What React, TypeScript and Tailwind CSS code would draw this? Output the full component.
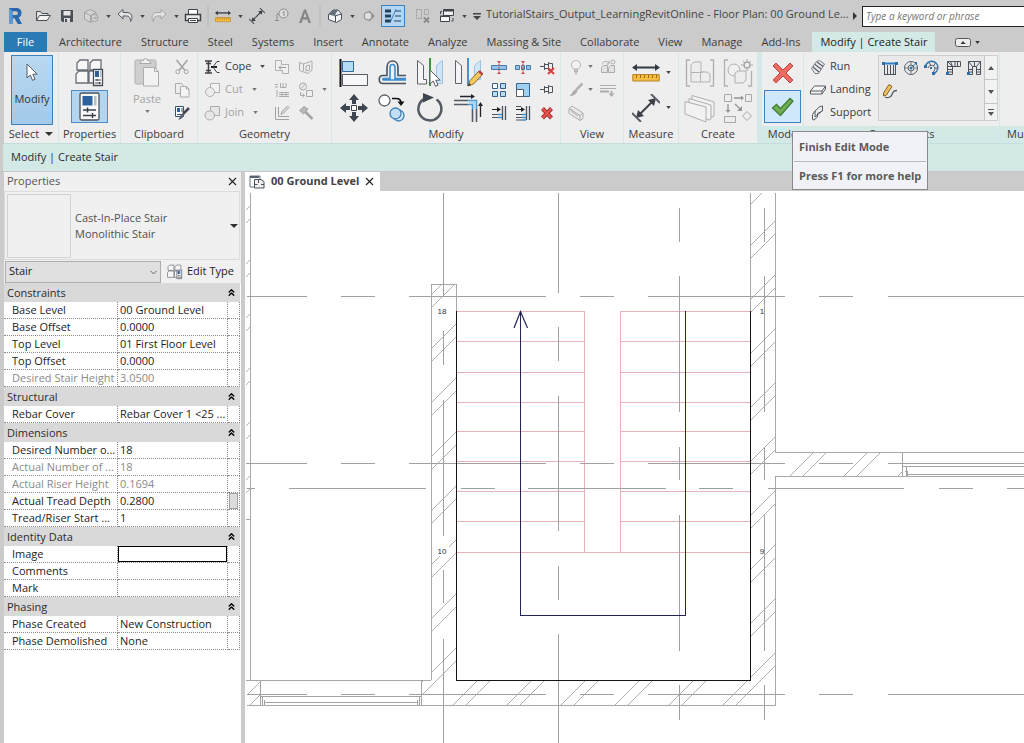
import type { ReactNode } from 'react';
import { ChevronDown, ChevronsUp, X } from 'lucide-react';

type IconProps = { w?: number; h?: number; children: ReactNode };

function Icon({ w = 16, h = 16, children }: IconProps) {
  return (
    <svg width={w} height={h} viewBox={`0 0 ${w} ${h}`} fill="none" className="shrink-0" aria-hidden="true">
      {children}
    </svg>
  );
}

function Caret({ className = 'text-[#444]' }: { className?: string }) {
  return (
    <svg width="5" height="3" viewBox="0 0 6 4" className={`shrink-0 ${className}`} aria-hidden="true">
      <path d="M0 0h6L3 4z" fill="currentColor" />
    </svg>
  );
}

function WideCaret() {
  return (
    <svg width="8" height="4" viewBox="0 0 8 4" className="shrink-0 text-[#333]" aria-hidden="true">
      <path d="M0 0h8L4 4z" fill="currentColor" />
    </svg>
  );
}

/* ---------- Quick access icons ---------- */

const RevitLogo = () => (
  <Icon w={16} h={18}>
    <path d="M2 1h7c3.500 0 5.500 1.800 5.500 5 0 2.300-1.200 3.900-3 4.600L15 17h-4.200L7.500 11.200H5.600V17H2z" fill="#2a67ae" />
    <path d="M5.600 4.300v3.800h3c1.400 0 2.200-.700 2.200-1.900s-.800-1.900-2.200-1.900z" fill="#cccccc" />
    <path d="M2 1l3.600 3.300V17H2z" fill="#5b9bd5" />
  </Icon>
);

const OpenIcon = () => (
  <Icon>
    <path d="M1.500 12.500v-9h4l1.500 2h6v2" stroke="#4a4f57" fill="#e4e4e4" />
    <path d="M1.500 12.500l3-5h11l-3.500 5z" stroke="#4a4f57" fill="#f2f2f2" />
  </Icon>
);

const SaveIcon = () => (
  <Icon>
    <path d="M2 2h12v12H3.500L2 12.500z" fill="#4b5058" />
    <path d="M4.500 3h7v4.500h-7z" fill="#e6e6e6" />
    <path d="M5 10h6v4H5z" fill="#dadada" />
    <path d="M6 11h2v3H6z" fill="#4b5058" />
  </Icon>
);

const SyncIcon = () => (
  <Icon>
    <path d="M1.500 4.500l5.500-3 6 3v6l-5.500 4-6-3.500z" stroke="#a2a2a2" fill="#d4d4d4" />
    <path d="M1.500 4.500l6 3 5.500-3M7.500 7.500v7" stroke="#a2a2a2" />
    <circle cx="11.500" cy="10" r="3.500" stroke="#a2a2a2" fill="#d6d6d6" />
    <path d="M9.500 10h4M12 8.500l1.500 1.500-1.500 1.500" stroke="#a2a2a2" />
  </Icon>
);

const UndoIcon = ({ color = '#555b63', flip = false }: { color?: string; flip?: boolean }) => (
  <Icon>
    <path
      d={
        flip
          ? 'M15 6l-5-4.500v3H6C2.500 4.500 1 7 1 9.500c0 1.500.500 3 1.500 4C2.500 9.500 4 8 6.500 8H10v3z'
          : 'M1 6l5-4.500v3h4c3.500 0 5 2.500 5 5 0 1.500-.500 3-1.500 4 0-4-1.500-5.500-4-5.500H6v3z'
      }
      stroke={color}
      fill="#e3e3e3"
    />
  </Icon>
);

const PrintIcon = () => (
  <Icon w={18}>
    <path d="M4.500 6.500v-5h9v5" stroke="#3f444b" fill="#fff" />
    <path d="M1.500 6.500h15v6h-15z" stroke="#3f444b" fill="#e8e8e8" strokeWidth="1.500" />
    <path d="M4.500 10.500h9v4h-9z" stroke="#3f444b" fill="#fff" />
    <path d="M6 12.500h6" stroke="#3f444b" />
  </Icon>
);

const RulerIcon = ({ w = 16, h = 16 }: { w?: number; h?: number }) => (
  <svg width={w} height={h} viewBox="0 0 28 20" preserveAspectRatio="none" fill="none" className="shrink-0" aria-hidden="true">
    <path d="M3 4.500h22" stroke="#333b45" strokeWidth="2" />
    <path d="M0 4.500L5 1v7zM28 4.500L23 1v7z" fill="#333b45" />
    <path d="M.800 11.500h26.400v6.500H.800z" fill="#f5bd3f" stroke="#b4842c" />
    <path d="M4.500 12v3M8.500 12v3M12.500 12v3M16.500 12v3M20.500 12v3M24.500 12v3" stroke="#9a6c1a" />
  </svg>
);

const AlignedDimIcon = ({ w = 16, h = 16 }: { w?: number; h?: number }) => (
  <svg width={w} height={h} viewBox="0 0 28 28" fill="none" className="shrink-0" aria-hidden="true">
    <path d="M6 22L22 6" stroke="#3b4048" strokeWidth="2" />
    <path d="M4 24l2-8 6 6zM24 4l-8 2 6 6z" fill="#3b4048" />
    <path d="M0 19l9 9M19 0l9 9" stroke="#5b6068" strokeWidth="2" />
  </svg>
);

const TagIcon = () => (
  <Icon>
    <circle cx="10.500" cy="5.500" r="4.500" stroke="#8c8c8c" fill="#dcdcdc" />
    <path d="M9.500 4.500l1.500-1v4.500M6 6H4v6.500M2 12.500h4" stroke="#8c8c8c" />
  </Icon>
);

const TextIcon = () => (
  <Icon>
    <path d="M2 15L7 1.500h2L14 15h-2.600l-1.200-3.600H5.800L4.600 15z" fill="#858585" />
    <path d="M6.500 9.200h3L8 4.500z" fill="#cccccc" />
  </Icon>
);

const House3DIcon = () => (
  <Icon>
    <path d="M1.500 6.500L6 2h5l3.500 4v5.500l-5 3-8-3z" stroke="#44505e" fill="#f4f4f4" />
    <path d="M1 6.500L6 2h5L7.500 8z" fill="#66717d" />
    <path d="M7.500 8l7-2M8.500 8v6" stroke="#44505e" />
  </Icon>
);

const SectionIcon = () => (
  <Icon>
    <path d="M8 2l6 6-6 6z" fill="#989898" />
    <circle cx="7" cy="8" r="4" stroke="#8a8a8a" fill="#dedede" />
  </Icon>
);

const ThinLinesIcon = () => (
  <Icon w={18}>
    <path d="M1 3h6M1 8h6M1 13h6" stroke="#27405c" strokeWidth="3" />
    <path d="M11 3h6M11 8h6M10 13h7" stroke="#27405c" />
    <path d="M12 1L6 15" stroke="#3f83c4" />
  </Icon>
);

const CloseHiddenIcon = () => (
  <Icon>
    <path d="M1.500 1.500h5v9h-5zM9.500 1.500h4v5h-4z" stroke="#9a9a9a" strokeDasharray="2 1" />
    <path d="M9 9.500l5 5M14 9.500l-5 5" stroke="#8a8a8a" strokeWidth="1.800" />
  </Icon>
);

const SwitchWindowsIcon = () => (
  <Icon>
    <path d="M4.500 1.500h10v6h-10z" stroke="#3e444c" fill="#eee" />
    <path d="M4 2.500h11M1 8.500h10" stroke="#3e444c" strokeWidth="2" />
    <path d="M1.500 8.500h9v5h-9z" stroke="#3e444c" fill="#f7f7f7" />
    <path d="M1.500 6V3.500H3M14 10v3h-1.500" stroke="#3e444c" />
  </Icon>
);

/* ---------- Ribbon icons ---------- */

const CursorShape = ({ x = 0, y = 0 }: { x?: number; y?: number }) => (
  <path d="M0 0v14l3.300-3 2.200 5.300 2.500-1-2.200-5.100h4.400z" transform={`translate(${x} ${y})`} fill="#fff" stroke="#555c66" />
);

const TypePropsIcon = ({ w = 30, h = 30 }: { w?: number; h?: number }) => (
  <svg width={w} height={h} viewBox="0 0 30 30" fill="none" className="shrink-0" aria-hidden="true">
    <path d="M2 5l3-3h8v10H2zM15 5l3-3h8v10H15zM1 16l3-3h9v12H1zM14 13h10v12H14z" fill="#f7f7f7" stroke="#6a6f77" strokeWidth="1.300" />
    <path d="M18.500 11.500h9v16h-9z" fill="#fff" stroke="#454b55" strokeWidth="1.300" />
    <path d="M20 13h4v6h-4z" fill="#2f5f95" />
    <path d="M25 13h1.500v6H25z" fill="#a9bdd3" />
    <path d="M20 22h6M20 25h6M22 21v2M24.500 24v2" stroke="#39404a" />
  </svg>
);

const PropertiesIcon = () => (
  <Icon w={24} h={29}>
    <rect x="2" y="1" width="19" height="27" rx="1.500" fill="#fafafa" stroke="#4b525c" strokeWidth="1.300" />
    <path d="M4.500 4h10v9.500h-10z" fill="#2d629f" />
    <path d="M16 4h2.500v9.500H16z" fill="#b5bfca" />
    <path d="M5 18h13M5 23.500h13" stroke="#3a4049" strokeWidth="1.500" />
    <path d="M9.500 15.500v5M14.500 21v5" stroke="#3a4049" strokeWidth="1.500" />
  </Icon>
);

const PasteIcon = () => (
  <Icon w={26} h={30}>
    <rect x="1" y="3" width="21" height="24" rx="1.500" fill="#cfcfcf" stroke="#b0b0b0" />
    <path d="M6 6.500l1.500-3h2a2 2 0 014 0h2l1.500 3z" fill="#f1f1f1" stroke="#a8a8a8" />
    <path d="M9.500 10.500h11l4 4v14.500h-15z" fill="#f2f2f2" stroke="#adadad" />
    <path d="M20.500 10.500v4h4" stroke="#adadad" />
  </Icon>
);

const ScissorsIcon = () => (
  <Icon>
    <path d="M2.500 1L11 11.500M13.500 1L5 11.500" stroke="#a6a6a6" strokeWidth="1.600" />
    <circle cx="3.800" cy="12.700" r="2" stroke="#a6a6a6" />
    <circle cx="12.200" cy="12.700" r="2" stroke="#a6a6a6" />
  </Icon>
);

const CopyIcon = () => (
  <Icon>
    <path d="M1.500 1.500h6l2 2v8h-8z" fill="#ededed" stroke="#ababab" />
    <path d="M6.500 4.500h6l2.500 2.500v8h-8.500z" fill="#f4f4f4" stroke="#ababab" />
    <path d="M12.500 4.500V7H15" stroke="#ababab" />
  </Icon>
);

const MatchIcon = () => (
  <Icon>
    <path d="M1.500 1.500h8v10h-8z" fill="#fff" stroke="#36506e" />
    <path d="M3 3h3v4H3z" fill="#2f5f95" />
    <path d="M3 9.500h5M8 3v4" stroke="#36506e" />
    <path d="M15 3l-6 6" stroke="#45484e" strokeWidth="2.500" />
    <path d="M9.500 8.500c1 1 1 1.500 0 3C8.500 13.500 6 14.500 4 15c1.500-1.500 1.500-3 2.500-4.500 1-1.500 2-2.500 3-2z" fill="#57626f" />
  </Icon>
);

const CopeIcon = () => (
  <Icon>
    <path d="M1 2h7M1 14h7M4.500 2v12M2 4.500h5M2 11.500h5" stroke="#3d4148" strokeWidth="1.500" />
    <path d="M7 8h6" stroke="#222" strokeWidth="2" />
    <path d="M15.500 2.500H13L10 6.500v3l3 4h2.500" stroke="#3d4148" />
  </Icon>
);

const CutIcon = () => (
  <Icon>
    <path d="M6.500 1.500h9v9h-9z" fill="#f3f3f3" stroke="#b0b0b0" />
    <circle cx="6" cy="10" r="4.500" fill="#ececec" stroke="#b0b0b0" />
  </Icon>
);

const JoinIcon = () => (
  <Icon>
    <path d="M6.500 6V1.500h9v9h-5A4.700 4.700 0 111 10c0-2.500 2-4.300 5.500-4z" fill="#e6e6e6" stroke="#acacac" />
    <path d="M6.500 6c2.500.300 4 2 4 4.500" stroke="#acacac" />
  </Icon>
);

const WallJoinIcon = () => (
  <Icon>
    <path d="M1.500 1.500h6v4h7v9h-6v-3h-7z" fill="#f0f0f0" stroke="#b0b0b0" />
    <path d="M5 8.500h7M7 6.500l-2 2 2 2" stroke="#9c9c9c" />
  </Icon>
);

const SplitFaceIcon = () => (
  <Icon>
    <path d="M1.500 3.500l4 1.500 8.500-3v9l-4 3.500-8.500-3z" fill="#ececec" stroke="#adadad" />
    <path d="M5.500 5v7M8 7l3.500-1v5L8 12z" stroke="#adadad" />
  </Icon>
);

const BeamIcon = () => (
  <Icon>
    <path d="M1 2.500h3M1 5h3M6.500 1v4.500H12V1M9 1v4M3 8v7M5 10.500h10M5 12.500h10M5 14.500h10M8 10v5M12 10v5" stroke="#ababab" />
  </Icon>
);

const PaintRoomIcon = () => (
  <Icon>
    <circle cx="5" cy="4.500" r="3.500" stroke="#a8a8a8" />
    <path d="M3 6.500l4-4M8.500 8.500h6v6h-6zM2.500 10v3.500h4M4.500 11.500l2 2-2 2" stroke="#a8a8a8" />
  </Icon>
);

const DemolishPlanIcon = () => (
  <Icon>
    <path d="M1.500 2v12.500H15M4.500 2v9.500H15" stroke="#a3a3a3" />
    <path d="M7 9.500l1-3 5.500-5.500 1.500 1.500-5.500 5.500z" fill="#ddd" stroke="#a3a3a3" />
  </Icon>
);

const HammerIcon = () => (
  <Icon>
    <path d="M1.500 5.500L6 1.500l4 2.500-4.500 5z" fill="#b8b8b8" stroke="#a3a3a3" />
    <path d="M7.500 7l7 7" stroke="#a3a3a3" strokeWidth="2.500" />
  </Icon>
);

const AlignIcon = () => (
  <Icon w={30} h={28}>
    <path d="M1.500 0v28" stroke="#111" strokeWidth="2" />
    <path d="M3.500 2.500h11v10h-11z" fill="#b5dcf5" stroke="#34679c" />
    <path d="M3.500 15.500h25v11h-25z" fill="#f7f7f7" stroke="#555b64" />
  </Icon>
);

const OffsetIcon = () => (
  <Icon w={30} h={28}>
    <path d="M29 24.500H6c-5 0-5-8 0-8h4V8c0-8 11-8 11 0v8.500h8" stroke="#4a525d" strokeWidth="1.600" />
    <path d="M29 21H6.500c-1 0-1-1.500 0-1.500H13V8.500c0-4 5-4 5 0v11h11" stroke="#3e8ccb" strokeWidth="1.600" />
  </Icon>
);

const MirrorPickIcon = () => (
  <Icon w={30} h={30}>
    <path d="M2.500 2.500l6 5v14h3v4.500h-9z" fill="#f5f5f5" stroke="#5c636d" />
    <path d="M27.500 2.500l-6 5v18h6z" fill="#cfe6f6" stroke="#9cc3e0" />
    <path d="M15 0v28" stroke="#3d9341" strokeWidth="2" />
    <CursorShape x={15} y={12} />
  </Icon>
);

const MirrorDrawIcon = () => (
  <Icon w={30} h={30}>
    <path d="M2.500 2.500l6 5v18h-6z" fill="#f5f5f5" stroke="#5c636d" />
    <path d="M27.500 2.500l-6 5v14h6z" fill="#cfe6f6" stroke="#9cc3e0" />
    <path d="M15 0v28" stroke="#4a93cf" strokeWidth="2" />
    <path d="M15 28l2-5.500L26 13l3.500 3.500L20.500 26z" fill="#f4c95d" stroke="#8a6a2c" />
    <path d="M26 13l3.500 3.500" stroke="#b7454c" strokeWidth="2.500" />
    <path d="M15 28l1-3 2 2z" fill="#333" />
  </Icon>
);

const MoveIcon = () => (
  <Icon w={30} h={30}>
    <path d="M12.500 12.500h5v5h-5z" fill="#fff" stroke="#3f454e" />
    <path d="M15 1l5 6h-3v4h-4V7h-3zM15 29l-5-6h3v-4h4v4h3zM1 15l6-5v3h4v4H7v3zM29 15l-6 5v-3h-4v-4h4v-3z" fill="#3f454e" />
  </Icon>
);

const CopyElementsIcon = () => (
  <Icon w={30} h={30}>
    <circle cx="7.500" cy="7.500" r="5.500" fill="#fff" stroke="#5c636d" strokeWidth="1.300" />
    <path d="M15 5.500h4c4 0 5 2 5 4.500" stroke="#111" strokeWidth="1.600" />
    <path d="M20.500 8.500h7L24 13z" fill="#111" />
    <circle cx="21.500" cy="22.500" r="5.500" fill="#d7ecfa" stroke="#3e7fb8" strokeWidth="1.300" />
    <circle cx="18.500" cy="20.500" r="5.500" fill="#c2e0f5" stroke="#3e7fb8" strokeWidth="1.300" />
  </Icon>
);

const RotateIcon = () => (
  <Icon w={30} h={30}>
    <path d="M10 5.500A11.500 11.500 0 1021.500 6.500" stroke="#555b64" strokeWidth="2.500" />
    <path d="M8 0l11 4.500L8 9.500z" fill="#3f454e" />
  </Icon>
);

const TrimIcon = () => (
  <Icon w={30} h={30}>
    <path d="M1 7.500h14M1 11.500h14" stroke="#555b64" strokeWidth="1.600" />
    <path d="M15 7.500h8.500V16M15 11.500h4.500V16" stroke="#4a9ad8" strokeWidth="1.600" />
    <path d="M16 9.500h5.500V16" stroke="#a8d3f2" strokeWidth="2.500" />
    <path d="M19.500 16v13M23.500 16v13" stroke="#555b64" strokeWidth="1.600" />
    <path d="M7 3.500h12M27.500 24V12" stroke="#22262c" strokeWidth="1.300" />
    <path d="M18 1l4 2.500L18 6zM25 13l2.500-4L30 13z" fill="#22262c" />
  </Icon>
);

const SplitIcon = ({ gap = false }: { gap?: boolean }) => (
  <Icon>
    <path d={gap ? 'M.500 6.500h4v4h-4zM11.500 6.500h4v4h-4zM6.500 6.500h3v4h-3z' : 'M.500 6.500h15v4H.500z'} fill="#8fc5ea" stroke="#4a7ba8" />
    <path d="M8 5v7" stroke="#c33a3a" strokeDasharray="2 1" />
    <path d="M6 2h4L8 5zM6 15h4L8 12z" fill="#d05555" />
  </Icon>
);

const PinIcon = ({ x = false }: { x?: boolean }) => (
  <Icon>
    <path d="M1 7.500h4M5.500 4v7M5.500 5.500h4M5.500 9.500h4M9.500 3.500l1.500 1h2.500v6H11l-1.500 1z" stroke="#4d535c" />
    {x && <path d="M9 9l6 6M15 9l-6 6" stroke="#d5403e" strokeWidth="2" />}
  </Icon>
);

const ArrayIcon = () => (
  <Icon>
    <path d="M1.500 1.500h5v5h-5z" fill="#fff" stroke="#365f8c" />
    <path d="M9.500 1.500h5v5h-5zM1.500 9.500h5v5h-5zM9.500 9.500h5v5h-5z" fill="#b9dcf5" stroke="#365f8c" />
  </Icon>
);

const ScaleIcon = () => (
  <Icon>
    <path d="M1.500 1.500h13v13h-13z" fill="#9fd0f0" stroke="#36658f" />
    <path d="M1.500 7.500h7v7h-7z" fill="#fff" stroke="#555b64" />
  </Icon>
);

const ExtendIcon = ({ multi = false }: { multi?: boolean }) => (
  <Icon>
    <path d="M11.500 1v14M14.500 1v14" stroke="#4b525c" strokeWidth="1.300" />
    <path d="M1 4.500h7" stroke="#222" />
    <path d="M6 2l4 2.500L6 7z" fill="#222" />
    <path d={multi ? 'M1 9.500h6M1 12.500h6M1 15h6M1 1.500h5' : 'M1 9.500h6M1 12.500h6'} stroke="#4b525c" />
    <path d={multi ? 'M7 9.500h4M7 12.500h4M7 15h4' : 'M7 9.500h4M7 12.500h4'} stroke="#3f93d4" strokeWidth="1.500" />
  </Icon>
);

const DeleteIcon = () => (
  <Icon>
    <path d="M3.500 3.500l9 9.500M12.500 3.500l-9 9.500" stroke="#9f2323" strokeWidth="4" />
    <path d="M3.500 3.500l9 9.500M12.500 3.500l-9 9.500" stroke="#e25450" strokeWidth="2.500" />
  </Icon>
);

const BulbIcon = () => (
  <Icon>
    <circle cx="8" cy="6" r="4.500" fill="#f3f3f3" stroke="#b8b8b8" />
    <path d="M6 10.500h4M6 12.500h4M7 14.500h2" stroke="#adadad" strokeWidth="1.500" />
  </Icon>
);

const DisplaceIcon = () => (
  <Icon>
    <path d="M1.500 8.500l2-2h4v7h-6zM8.500 8.500l2-2h4v7h-6z" fill="#e2e2e2" stroke="#adadad" />
    <path d="M2 5.500C3 2 7 1.500 9 4M9 1.500V5H6" stroke="#adadad" />
    <circle cx="13" cy="3" r="2" stroke="#adadad" />
  </Icon>
);

const BrushIcon = () => (
  <Icon>
    <path d="M14.500 1.500L8 8" stroke="#b3b3b3" strokeWidth="2.500" />
    <path d="M8.500 7.500c1.500 1.500.500 3.500-1 4.500-2 1.500-4 2-6.500 2.500 2-1.500 2.500-3 3.500-4.500 1-1.500 2.500-3 4-2.500z" fill="#adadad" />
  </Icon>
);

const LineworkIcon = () => (
  <Icon>
    <path d="M0 3.500h16M0 6.500h16" stroke="#adadad" />
    <path d="M0 9.500h9M11.500 9v3" stroke="#adadad" strokeWidth="2" />
    <path d="M8.500 11.500h6L11.500 15z" fill="#adadad" />
  </Icon>
);

const SectionBoxIcon = () => (
  <Icon>
    <path d="M1 3.500L4 1l11 7v5.500l-3 2-11-7z" fill="#e9e9e9" stroke="#adadad" />
    <path d="M1 3.500l11 7v5M12 10.500L15 8M4 4v3l6 4" stroke="#adadad" />
  </Icon>
);

const GroupIcon = () => (
  <Icon w={30} h={28}>
    <path d="M5 1H1.500v26H5M25 1h3.500v26H25" stroke="#b0b0b0" strokeWidth="1.300" />
    <path d="M6 6l3-3h7v10h6l3 2v8H6z" fill="#ededed" stroke="#b3b3b3" />
    <path d="M6 13.500h9.500v9.500M15.500 14l3-1.500" stroke="#b3b3b3" />
  </Icon>
);

const CreateSimilarIcon = () => (
  <Icon w={30} h={28}>
    <path d="M5 1H1.500v26H5M25 27h3.500V12" stroke="#b0b0b0" strokeWidth="1.300" />
    <circle cx="11" cy="11" r="6" fill="#f0f0f0" stroke="#b0b0b0" />
    <path d="M12 14l3-2h8v9l-3 3h-8z" fill="#ededed" stroke="#b0b0b0" />
    <circle cx="24" cy="6" r="3" stroke="#a6a6a6" strokeWidth="1.500" />
    <path d="M24 0v2M24 10v2M18 6h2M28 6h2M20 2l1.500 1.500M28 2l-1.500 1.500" stroke="#a6a6a6" />
  </Icon>
);

const AssemblyIcon = () => (
  <Icon w={32} h={30}>
    <path d="M8 2.500L30 9v14l-2 1L8 14z" fill="#f2f2f2" stroke="#adadad" />
    <path d="M5 5.500L27 12v14l-2 1L5 18z" fill="#f2f2f2" stroke="#adadad" />
    <path d="M1 8.500L22 14v15L1 21z" fill="#f2f2f2" stroke="#adadad" />
  </Icon>
);

const PartsIcon = () => (
  <Icon w={30} h={30}>
    <path d="M1.500 1.500h7v7h-7zM22.500 1.500h6v7h-6zM1.500 23.500h11v6h-11zM24 18.500l4.500 4.500-4.500 4.500-4.500-4.500z" fill="#ededed" stroke="#a8a8a8" />
    <path d="M11 5h8M5 11v7M12 11l5 5" stroke="#949494" strokeWidth="1.300" />
    <path d="M18 2.500l3 2.500-3 2.500zM2.500 17h5L5 20zM14 18h5v-5z" fill="#949494" />
  </Icon>
);

const CancelIcon = () => (
  <Icon w={24} h={24}>
    <path d="M2 5l3-3 7 7 7-7 3 3-7 7 7 7-3 3-7-7-7 7-3-3 7-7z" fill="#ee6b64" stroke="#c24742" />
  </Icon>
);

const FinishIcon = () => (
  <Icon w={24} h={22}>
    <path d="M1.500 12l4-3.500 4 4L19 2.500l3 2.500L9.500 19.500z" fill="#6fae53" stroke="#417f37" strokeWidth="1.300" />
  </Icon>
);

const RunIcon = () => (
  <Icon>
    <path d="M1.500 9.500l5-7 3-1 5 3.500-6 9.500H5z" fill="#ededed" stroke="#737982" />
    <path d="M3 8l6 5M5 5.500l6 4.500M7 3l6 4.500" stroke="#5c636d" strokeWidth="1.300" />
  </Icon>
);

const LandingIcon = () => (
  <Icon>
    <path d="M.500 9l4-5h11l-3.500 5zM.500 9v3h11.500V9M12 12l3.500-5V4" fill="#f7f7f7" stroke="#545b65" />
  </Icon>
);

const SupportIcon = () => (
  <Icon>
    <path d="M2.500 9.500L5 6l5-4.500 2.500-.500v5l-5 2.500v3.500L4 15l-1.500-.500z" fill="#ededed" stroke="#545b65" />
    <path d="M5 6v6l7-6" stroke="#545b65" />
  </Icon>
);

const StraightRunIcon = () => (
  <Icon>
    <path d="M1 3.500h14M2.500 5v9.500M5.500 5v9.500M8.500 5v9.500M11.500 5v9.500M13.500 5v9.500M2 14.500h12" stroke="#4b525c" />
    <path d="M3 3.500h10" stroke="#2f7fc4" strokeWidth="2" />
    <path d="M0 2h3v3H0zM13 2h3v3h-3z" fill="#2f6fae" />
  </Icon>
);

const FullSpiralIcon = () => (
  <Icon>
    <circle cx="8" cy="8" r="6.500" stroke="#555b64" />
    <circle cx="8" cy="8" r="3" stroke="#555b64" />
    <path d="M8 1.500v4M8 10.500v4M1.500 8h4M10.500 8h4" stroke="#777d86" />
    <path d="M8 8l5-4.500" stroke="#2f7fc4" />
    <circle cx="8" cy="8" r="1.500" fill="#2f6fae" />
    <path d="M12 2h2v2h-2z" fill="#2f6fae" />
  </Icon>
);

const CenterEndsIcon = () => (
  <Icon>
    <path d="M1.500 6C3 1 9 0 12 3c3 3 2.500 8-2.500 11.500" stroke="#2f6fae" strokeWidth="1.300" />
    <path d="M4 8c1-3 4.500-3.500 6-1.500 1.500 1.500 1 4-1 6M5.500 3l1.500 3M11.500 3L9.500 6M14 8h-3" stroke="#555b64" />
    <path d="M0 5h3v3H0zM8 12h3v3H8zM6 7h2v2H6z" fill="#2f6fae" />
  </Icon>
);

const LWinderIcon = () => (
  <Icon>
    <path d="M2.500 14.500v-13h13v5h-8v8zM2.500 9.500h5M2.500 12h5M2.500 6.500h5M10 1.500v5M12.500 1.500v5M2.500 1.500l5 5M5.500 1.500l2 5" stroke="#4b525c" />
    <path d="M1 12h3v3H1z" fill="#2f6fae" />
  </Icon>
);

const UWinderIcon = () => (
  <Icon>
    <path d="M2.500 14.500v-13h12v13h-4v-8h-4v8zM2.500 9.500h4M2.500 12h4M10.500 9.500h4M10.500 12h4M2.500 1.500l4 5M14.500 1.500l-4 5M8.500 1.500v5" stroke="#4b525c" />
    <path d="M1 12h3v3H1z" fill="#2f6fae" />
  </Icon>
);

const SketchIcon = () => (
  <Icon>
    <path d="M1.500 10L7 1.500 10 3.500 4.500 12 1.500 13z" fill="#f2c25a" stroke="#7d5f28" />
    <path d="M3 14c3 1.500 6 0 7-2.500s1.500-4 5-4" stroke="#555b64" strokeWidth="1.300" />
  </Icon>
);

const ViewTabIcon = () => (
  <Icon w={16} h={14}>
    <path d="M1 1h10v11H1z" fill="#fff" stroke="#6b7280" />
    <path d="M1 2h9" stroke="#596270" strokeWidth="2" />
    <path d="M5.500 4.500H12l3 2v6.500H5.500z" fill="#eee" stroke="#4b525c" />
    <path d="M9.500 5v3M5.500 9.500h3M12 9.500h3" stroke="#4b525c" />
  </Icon>
);

/* ---------- Title bar ---------- */

function QuickButton({ label, children, active = false }: { label: string; children: ReactNode; active?: boolean }) {
  return (
    <button
      aria-label={label}
      className={`flex h-[22px] w-6 shrink-0 items-center justify-center ${
        active ? 'border border-[#3d7fc0] bg-[#b4d6f3]' : ''
      }`}
    >
      {children}
    </button>
  );
}

function QuickCaret({ label }: { label: string }) {
  return (
    <button aria-label={label} className="flex h-5 w-[10px] shrink-0 items-center justify-center">
      <Caret />
    </button>
  );
}

const Divider = () => <span className="mx-[2px] h-5 w-[2px] shrink-0 bg-[#c0c0c0]" />;

function TitleBar() {
  return (
    <div className="flex h-8 items-center pl-[7px]">
      <button aria-label="Application menu" className="mr-1 flex w-5 shrink-0">
        <RevitLogo />
      </button>
      <QuickButton label="Open"><OpenIcon /></QuickButton>
      <QuickButton label="Save"><SaveIcon /></QuickButton>
      <QuickButton label="Synchronize"><SyncIcon /></QuickButton>
      <QuickCaret label="Synchronize options" />
      <QuickButton label="Undo"><UndoIcon /></QuickButton>
      <QuickCaret label="Undo list" />
      <QuickButton label="Redo"><UndoIcon color="#a3a3a3" flip /></QuickButton>
      <QuickCaret label="Redo list" />
      <QuickButton label="Print"><PrintIcon /></QuickButton>
      <Divider />
      <QuickButton label="Measure"><RulerIcon w={16} h={13} /></QuickButton>
      <QuickCaret label="Measure options" />
      <QuickButton label="Aligned dimension"><AlignedDimIcon /></QuickButton>
      <QuickButton label="Tag by category"><TagIcon /></QuickButton>
      <QuickButton label="Text"><TextIcon /></QuickButton>
      <Divider />
      <QuickButton label="Default 3D view"><House3DIcon /></QuickButton>
      <QuickCaret label="3D view options" />
      <QuickButton label="Section"><SectionIcon /></QuickButton>
      <QuickButton label="Thin lines" active><ThinLinesIcon /></QuickButton>
      <span className="w-[6px] shrink-0" />
      <QuickButton label="Close inactive views"><CloseHiddenIcon /></QuickButton>
      <QuickButton label="Switch windows"><SwitchWindowsIcon /></QuickButton>
      <QuickCaret label="Window list" />
      <button aria-label="Customize toolbar" className="flex h-5 w-4 shrink-0 items-center justify-center">
        <svg width="8" height="7" viewBox="0 0 8 7" aria-hidden="true">
          <path d="M0 0h8v1.500H0zM0 3h8L4 7z" fill="#444" />
        </svg>
      </button>
      <h1 className="ml-px flex-1 truncate pb-1 text-[11px] text-[#444]">
        TutorialStairs_Output_LearningRevitOnline - Floor Plan: 00 Ground Le...
      </h1>
      <svg width="4" height="8" viewBox="0 0 4 8" className="mr-[5px] shrink-0" aria-hidden="true">
        <path d="M0 0v8l4-4z" fill="#333" />
      </svg>
      <input
        type="search"
        aria-label="Search help"
        placeholder="Type a keyword or phrase"
        className="h-[21px] w-[162px] shrink-0 border border-r-0 border-[#222] bg-white px-[3px] text-[10px] italic outline-none placeholder:text-[#777]"
      />
    </div>
  );
}

/* ---------- Tabs ---------- */

const TABS = [
  'Architecture',
  'Structure',
  'Steel',
  'Systems',
  'Insert',
  'Annotate',
  'Analyze',
  'Massing & Site',
  'Collaborate',
  'View',
  'Manage',
  'Add-Ins',
];

function RibbonTabs() {
  return (
    <nav className="flex h-5 items-stretch whitespace-nowrap pl-1 text-[#3c3c3c]">
      <button className="w-[43px] shrink-0 bg-[#2a7ab5] text-white">File</button>
      <div className="flex gap-[19px] px-3">
        {TABS.map((tab) => (
          <button key={tab}>{tab}</button>
        ))}
      </div>
      <button className="bg-[#d2e9e6] px-2 text-[#222]">Modify | Create Stair</button>
      <button aria-label="Minimize ribbon" className="ml-5 flex items-center gap-1">
        <svg width="16" height="9" viewBox="0 0 16 9" fill="none" aria-hidden="true">
          <rect x=".500" y=".500" width="15" height="8" rx="2" fill="#eee" stroke="#555" />
          <path d="M5.500 6L8 3l2.500 3z" fill="#333" />
        </svg>
        <Caret className="text-[#333]" />
      </button>
    </nav>
  );
}

/* ---------- Ribbon ---------- */

type PanelProps = { title: ReactNode; className?: string; context?: boolean; children?: ReactNode };

function Panel({ title, className = '', context = false, children }: PanelProps) {
  return (
    <section className={`flex shrink-0 flex-col border-r border-[#d5e8e8] ${context ? 'bg-[#d2e9e6]' : ''} ${className}`}>
      <div className="flex h-[74px] bg-[#eeeeee] pt-[3px]">{children}</div>
      <div className="flex h-4 items-center justify-center gap-[6px] whitespace-nowrap text-[#3a3a3a]">{title}</div>
    </section>
  );
}

function Tool({ label, className = 'h-[23px] w-6', children }: { label: string; className?: string; children: ReactNode }) {
  return (
    <button aria-label={label} className={`flex items-center justify-center ${className}`}>
      {children}
    </button>
  );
}

const BIG = 'h-[35px] w-[38px]';

function GeometryRow({ icon, label, dim, children }: { icon: ReactNode; label: string; dim?: boolean; children: ReactNode }) {
  return (
    <div className="flex h-[23px] items-center">
      <button className={`flex w-[70px] items-center gap-[5px] ${dim ? 'text-[#a3a3a3]' : 'text-[#3a3a3a]'}`}>
        {icon}
        <span>{label}</span>
        <span className="ml-1"><Caret className={dim ? 'text-[#777]' : 'text-[#444]'} /></span>
      </button>
      <div className="flex items-center gap-2">{children}</div>
    </div>
  );
}

function Ribbon() {
  return (
    <div className="ml-1 flex h-[92px] overflow-visible border-b border-[#c3dedd] bg-[#eeeeee]">
      <Panel title={<>Select <WideCaret /></>} className="w-[55px]">
        <button className="ml-[7px] flex h-[70px] w-[42px] flex-col items-center border border-[#3d7fb8] bg-gradient-to-b from-[#b9d8f1] to-[#a3caea] pt-[7px] text-[#333]">
          <Icon w={12} h={20}><CursorShape x={1} y={1} /></Icon>
          <span className="mt-2">Modify</span>
        </button>
      </Panel>

      <Panel title="Properties" className="w-[62px]">
        <div className="flex w-full flex-col items-center">
          <Tool label="Type properties" className="h-[35px] w-[36px]"><TypePropsIcon /></Tool>
          <Tool label="Properties" className="h-[33px] w-[37px] border border-[#4f8dc4] bg-[#b4d5f0]"><PropertiesIcon /></Tool>
        </div>
      </Panel>

      <Panel title="Clipboard" className="w-[77px]">
        <button className="ml-[7px] flex w-[38px] flex-col items-center pt-[2px] text-[#a3a3a3]">
          <PasteIcon />
          <span className="mt-1 leading-4">Paste</span>
          <span className="flex h-2 items-center"><Caret className="text-[#777]" /></span>
        </button>
        <div className="ml-1 flex flex-col">
          <Tool label="Cut to clipboard"><ScissorsIcon /></Tool>
          <Tool label="Copy to clipboard"><CopyIcon /></Tool>
          <Tool label="Match type"><MatchIcon /></Tool>
        </div>
      </Panel>

      <Panel title="Geometry" className="w-[134px]">
        <div className="ml-[6px]">
          <GeometryRow icon={<CopeIcon />} label="Cope">
            <WallJoinIcon />
            <SplitFaceIcon />
          </GeometryRow>
          <GeometryRow icon={<CutIcon />} label="Cut" dim>
            <BeamIcon />
            <PaintRoomIcon />
            <Caret className="text-[#777]" />
          </GeometryRow>
          <GeometryRow icon={<JoinIcon />} label="Join" dim>
            <DemolishPlanIcon />
            <HammerIcon />
          </GeometryRow>
        </div>
      </Panel>

      <Panel title="Modify" className="w-[229px]">
        <div className="ml-[3px] grid grid-cols-4 content-start">
          <Tool label="Align" className={BIG}><AlignIcon /></Tool>
          <Tool label="Offset" className={BIG}><OffsetIcon /></Tool>
          <Tool label="Mirror - pick axis" className={BIG}><MirrorPickIcon /></Tool>
          <Tool label="Mirror - draw axis" className={BIG}><MirrorDrawIcon /></Tool>
          <Tool label="Move" className={BIG}><MoveIcon /></Tool>
          <Tool label="Copy" className={BIG}><CopyElementsIcon /></Tool>
          <Tool label="Rotate" className={BIG}><RotateIcon /></Tool>
          <Tool label="Trim/Extend to corner" className={BIG}><TrimIcon /></Tool>
        </div>
        <div className="grid grid-cols-3 content-start">
          <Tool label="Split element"><SplitIcon /></Tool>
          <Tool label="Split with gap"><SplitIcon gap /></Tool>
          <Tool label="Unpin"><PinIcon x /></Tool>
          <Tool label="Array"><ArrayIcon /></Tool>
          <Tool label="Scale"><ScaleIcon /></Tool>
          <Tool label="Pin"><PinIcon /></Tool>
          <Tool label="Trim/Extend single"><ExtendIcon /></Tool>
          <Tool label="Trim/Extend multiple"><ExtendIcon multi /></Tool>
          <Tool label="Delete"><DeleteIcon /></Tool>
        </div>
      </Panel>

      <Panel title="View" className="w-[63px]">
        <div className="ml-[3px] grid grid-cols-[24px_8px_24px] content-start items-center">
          <Tool label="Hide in view"><BulbIcon /></Tool>
          <Caret className="text-[#777]" />
          <Tool label="Displace elements"><DisplaceIcon /></Tool>
          <Tool label="Override graphics"><BrushIcon /></Tool>
          <Caret className="text-[#777]" />
          <Tool label="Linework"><LineworkIcon /></Tool>
          <Tool label="Selection box"><SectionBoxIcon /></Tool>
        </div>
      </Panel>

      <Panel title="Measure" className="w-[55px]">
        <div className="ml-[3px] grid grid-cols-[38px_8px] content-start items-center gap-x-px">
          <Tool label="Measure distance" className={BIG}><RulerIcon w={28} h={20} /></Tool>
          <Caret />
          <Tool label="Aligned dimension" className={BIG}><AlignedDimIcon w={28} h={28} /></Tool>
          <Caret />
        </div>
      </Panel>

      <Panel title="Create" className="w-[79px]">
        <div className="ml-[2px] grid grid-cols-2 content-start">
          <Tool label="Create group" className={BIG}><GroupIcon /></Tool>
          <Tool label="Create similar" className={BIG}><CreateSimilarIcon /></Tool>
          <Tool label="Create assembly" className={BIG}><AssemblyIcon /></Tool>
          <Tool label="Create parts" className={BIG}><PartsIcon /></Tool>
        </div>
      </Panel>

      <Panel title="Mode" context className="w-[46px] border-l-4">
        <div className="flex w-full flex-col items-center">
          <Tool label="Cancel edit mode" className="h-[35px] w-[37px]"><CancelIcon /></Tool>
          <div className="relative">
            <Tool label="Finish edit mode" className="h-[33px] w-[37px] border border-[#3f82bd] bg-[#cfe8fb]"><FinishIcon /></Tool>
            <div role="tooltip" className="absolute left-7 top-[41px] z-10 whitespace-nowrap border border-[#8a8a8a] bg-[#f1f2f7] font-bold text-[#5a5a5a]">
              <p className="mx-px border-b border-[#b9b9b9] px-[5px] py-[6px] leading-[17px]">Finish Edit Mode</p>
              <p className="px-[6px] py-[5px] leading-[17px]">Press F1 for more help</p>
            </div>
          </div>
        </div>
      </Panel>

      <Panel title="Components" context className="w-[196px]">
        <div className="ml-[6px] flex w-[68px] flex-col text-[#3a3a3a]">
          <button className="flex h-[23px] items-center gap-1"><RunIcon />Run</button>
          <button className="flex h-[23px] items-center gap-1"><LandingIcon />Landing</button>
          <button className="flex h-[23px] items-center gap-1"><SupportIcon />Support</button>
        </div>
        <div className="flex h-[66px] w-[120px] border border-[#cfcfcf] bg-[#e9e9e9]">
          <div className="grid flex-1 grid-cols-5 content-start">
            <Tool label="Straight" className="h-[23px]"><StraightRunIcon /></Tool>
            <Tool label="Full-step spiral" className="h-[23px]"><FullSpiralIcon /></Tool>
            <Tool label="Center-ends spiral" className="h-[23px]"><CenterEndsIcon /></Tool>
            <Tool label="L-shape winder" className="h-[23px]"><LWinderIcon /></Tool>
            <Tool label="U-shape winder" className="h-[23px]"><UWinderIcon /></Tool>
            <Tool label="Create sketch" className="h-[23px]"><SketchIcon /></Tool>
          </div>
          <div className="flex w-[13px] flex-col divide-y divide-[#c6c6c6] border-l border-[#c6c6c6] bg-[#f2f2f2] text-[#555]">
            <button aria-label="Scroll up" className="flex flex-1 items-center justify-center">
              <svg width="6" height="4" viewBox="0 0 6 4" aria-hidden="true"><path d="M0 4h6L3 0z" fill="currentColor" /></svg>
            </button>
            <button aria-label="Scroll down" className="flex flex-1 items-center justify-center">
              <svg width="6" height="4" viewBox="0 0 6 4" aria-hidden="true"><path d="M0 0h6L3 4z" fill="currentColor" /></svg>
            </button>
            <button aria-label="Expand gallery" className="flex h-4 items-center justify-center">
              <svg width="6" height="7" viewBox="0 0 6 7" aria-hidden="true"><path d="M0 0h6v1H0zM0 3h6L3 7z" fill="currentColor" /></svg>
            </button>
          </div>
        </div>
      </Panel>

      <section className="flex flex-1 flex-col bg-[#d2e9e6]">
        <div className="h-[74px] bg-[#eeeeee]" />
        <div className="flex h-4 items-center pl-[7px] text-[#3a3a3a]">Mu</div>
      </section>
    </div>
  );
}

/* ---------- Properties palette ---------- */

type Row = { name: string; value: string; readOnly?: boolean; handle?: boolean; active?: boolean };

const GROUPS: { title: string; rows: Row[] }[] = [
  {
    title: 'Constraints',
    rows: [
      { name: 'Base Level', value: '00 Ground Level' },
      { name: 'Base Offset', value: '0.0000' },
      { name: 'Top Level', value: '01 First Floor Level' },
      { name: 'Top Offset', value: '0.0000' },
      { name: 'Desired Stair Height', value: '3.0500', readOnly: true },
    ],
  },
  { title: 'Structural', rows: [{ name: 'Rebar Cover', value: 'Rebar Cover 1 <25 ...' }] },
  {
    title: 'Dimensions',
    rows: [
      { name: 'Desired Number o...', value: '18' },
      { name: 'Actual Number of ...', value: '18', readOnly: true },
      { name: 'Actual Riser Height', value: '0.1694', readOnly: true },
      { name: 'Actual Tread Depth', value: '0.2800', handle: true },
      { name: 'Tread/Riser Start ...', value: '1' },
    ],
  },
  {
    title: 'Identity Data',
    rows: [
      { name: 'Image', value: '', active: true },
      { name: 'Comments', value: '' },
      { name: 'Mark', value: '' },
    ],
  },
  {
    title: 'Phasing',
    rows: [
      { name: 'Phase Created', value: 'New Construction' },
      { name: 'Phase Demolished', value: 'None' },
    ],
  },
];

const CELL = 'h-[17px] border-b border-r border-dotted border-[#8c8c8c] p-0';

function PropertyTable() {
  return (
    <table className="w-full table-fixed border-separate border-spacing-0 whitespace-nowrap leading-4">
      <colgroup>
        <col className="w-[114px]" />
        <col />
        <col className="w-3" />
      </colgroup>
      {GROUPS.map((group) => (
        <tbody key={group.title}>
          <tr>
            <th colSpan={3} className="h-[19px] bg-[#d9d9d9] p-0 font-normal text-[#2c2c2c]">
              <button className="flex w-full items-center justify-between px-[3px]">
                {group.title}
                <ChevronsUp size={11} strokeWidth={3} className="text-black" />
              </button>
            </th>
          </tr>
          {group.rows.map((row) => (
            <tr key={row.name} className={row.readOnly ? 'text-[#8a8a8a]' : 'text-[#1c1c1c]'}>
              <td className={`${CELL} pl-2`}>{row.name}</td>
              <td className={CELL}>
                <input
                  aria-label={row.name}
                  defaultValue={row.value}
                  readOnly={row.readOnly}
                  className={`block h-4 w-full bg-transparent px-[2px] leading-4 outline-none ${
                    row.active ? 'border border-black' : ''
                  }`}
                />
              </td>
              <td className={CELL}>
                {row.handle && (
                  <button aria-label={`${row.name} association`} className="ml-px block h-4 w-[9px] border border-[#a0a0a0] bg-[#dcdcdc]" />
                )}
              </td>
            </tr>
          ))}
        </tbody>
      ))}
    </table>
  );
}

function PropertiesPalette() {
  return (
    <aside className="ml-1 flex w-[237px] shrink-0 flex-col bg-white">
      <div className="flex h-[19px] items-center justify-between bg-[#f0f0f0] pl-[3px] pr-[2px] text-[#555]">
        <h2>Properties</h2>
        <button aria-label="Close properties"><X size={13} strokeWidth={2} className="text-[#222]" /></button>
      </div>
      <div className="bg-[#f0f0f0] pr-px">
        <div className="flex h-[69px] items-center border border-[#dcdcdc] pl-[2px]">
          <div className="h-16 w-16 border border-[#d2d2d2]" />
          <div className="ml-1 flex-1 leading-4 text-[#505050]">
            <p>Cast-In-Place Stair</p>
            <p>Monolithic Stair</p>
          </div>
          <button aria-label="Change type" className="pr-px"><WideCaret /></button>
        </div>
        <div className="flex h-[23px] items-center">
          <div className="relative ml-px">
            <select
              aria-label="Filter"
              className="block h-[22px] w-[156px] appearance-none border border-[#adadad] bg-[#e0e0e0] pl-[3px] text-[#222] outline-none"
            >
              <option>Stair</option>
            </select>
            <ChevronDown size={11} className="pointer-events-none absolute right-[2px] top-[6px] text-[#555]" />
          </div>
          <button className="ml-[6px] flex items-center gap-1 text-[#222]">
            <TypePropsIcon w={16} h={16} />
            Edit Type
          </button>
        </div>
      </div>
      <div className="pr-px">
        <PropertyTable />
      </div>
    </aside>
  );
}

/* ---------- Floor plan ---------- */

const RISERS = [311, 341, 372, 402, 431, 461, 491, 521];

// Wall hatch is one family of 45 degree line pairs, 54 apart.
const HATCH = Array.from({ length: 24 }, (_, i) => 402 + i * 54);

// Start and end of each dash on the grid lines.
const ROW_DASHES = [[247, 307], [341, 375], [409, 546], [580, 614], [648, 785], [819, 853], [888, 1024]];
const MID_DASHES = [[247, 255], [289, 426], [461, 495], [528, 666], [699, 733], [768, 904], [939, 973], [1007, 1024]];
const LEFT_DASHES = [[193, 296], [331, 365], [400, 536], [570, 603], [639, 743]];
const CENTER_DASHES = [[193, 293], [327, 361], [396, 531], [566, 600], [634, 743]];
const RIGHT_DASHES = [[208, 242], [276, 412], [447, 480], [515, 651], [685, 720]];

const rowPath = (y: number, dashes: number[][]) => dashes.map(([a, b]) => `M${a} ${y}H${b}`).join('');
const colPath = (x: number, dashes: number[][]) => dashes.map(([a, b]) => `M${x} ${a}V${b}`).join('');

function FloorPlan() {
  return (
    <svg
      viewBox="245 191 779 552"
      preserveAspectRatio="xMinYMin slice"
      className="block min-h-[552px] w-full flex-1 bg-white"
      fill="none"
      role="img"
      aria-label="Ground level plan of the stair"
    >
      <defs>
        <clipPath id="walls">
          <path d="M431 284h25v397h-25zM421 680h355v26H421zM247 680h13v26h-13zM750 193h25v488h-25zM775 452h128v24H775zM246 193h4v302h-4z" />
        </clipPath>
      </defs>

      <g clipPath="url(#walls)" stroke="#b0b0b0" strokeWidth="1">
        {HATCH.map((s) => (
          <path key={s} d={`M${s - 743} 743L${s - 191} 191M${s - 730} 743L${s - 178} 191`} />
        ))}
      </g>

      {/* Wall faces */}
      <g stroke="#a8a8a8" shapeRendering="crispEdges">
        <path d="M431.500 680V284.500h25V311M250.500 193V680M246 680.500h185M247 705.500h528.500V476.500M750.500 193v118M775.500 193v259.500H1024M775 476.500h249" />
        <path d="M246 463.500h4M246 519.500h4" />
      </g>

      {/* Windows */}
      <g stroke="#a3a3a3" shapeRendering="crispEdges">
        <path d="M260.500 680v26M421.500 680v26M260 696.500h161M264 702.500h154M262.500 697v8M264.500 700v5M419.500 697v8M417.500 700v5" />
        <path d="M902.500 452v24M903 466.500h121M906 474.500h118M906.500 466v10M904.500 471h3v5" />
      </g>

      {/* Treads */}
      <g stroke="#e6b4b8" shapeRendering="crispEdges">
        {RISERS.map((y) => (
          <path key={y} d={`M457 ${y}.500H585M620 ${y}.500H750`} />
        ))}
        <path d="M457 552.500H750M584.500 311V552M620.500 311V552" />
      </g>

      {/* Grid */}
      <g stroke="#a0a0a0" shapeRendering="crispEdges">
        <path d={rowPath(296.5, ROW_DASHES)} />
        <path d={rowPath(463.5, ROW_DASHES)} />
        <path d={rowPath(488.5, MID_DASHES)} />
        <path d={rowPath(694.5, ROW_DASHES)} />
        <path d={colPath(443.5, LEFT_DASHES)} />
        <path d={colPath(558.5, CENTER_DASHES)} />
        <path d={colPath(679.5, RIGHT_DASHES)} />
        <path d={colPath(764.5, RIGHT_DASHES)} />
      </g>

      <path d="M456.500 311V680.500H750.500V311" stroke="#151515" shapeRendering="crispEdges" />

      {/* Stair path */}
      <path d="M520.500 311V615.500H685.500V311" stroke="#23235c" shapeRendering="crispEdges" />
      <path d="M514 328l6.500-16.500L527.500 328" stroke="#23235c" strokeWidth="1.200" />

      <path d="M436 546h13v10h-13z" fill="#fff" />
      <g fill="#333" fontFamily="'Liberation Sans', sans-serif" fontSize="8" textAnchor="middle">
        <text x="442" y="314">18</text>
        <text x="442" y="554">10</text>
        <text x="762" y="314">1</text>
        <text x="762" y="554">9</text>
      </g>
    </svg>
  );
}

export default function App() {
  return (
    <div className="flex min-h-screen flex-col overflow-hidden bg-[#cbcbcb] font-['Open_Sans','Noto_Sans',sans-serif] text-[11px]">
      <TitleBar />
      <RibbonTabs />
      <Ribbon />
      <div className="ml-[3px] flex h-[27px] items-center bg-[#d2e9e6] pl-2 text-[#2d2d2d]">Modify | Create Stair</div>
      <div className="flex flex-1 border-t border-[#c2c8c8]">
        <PropertiesPalette />
        <main className="ml-1 flex min-w-0 flex-1 flex-col">
          <div className="flex h-[19px]">
            <div className="flex items-center bg-white px-1 font-bold text-[#444]">
              <ViewTabIcon />
              <span className="ml-[6px]">00 Ground Level</span>
              <button aria-label="Close view" className="ml-1"><X size={13} strokeWidth={2} className="text-[#222]" /></button>
            </div>
          </div>
          <FloorPlan />
        </main>
      </div>
    </div>
  );
}
